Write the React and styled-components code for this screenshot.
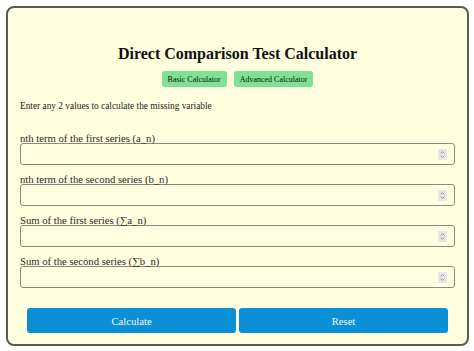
import React from "react";
import styled, { createGlobalStyle } from "styled-components";

const Global = createGlobalStyle`
  html, body {
    margin: 0;
    background: #fff;
  }
  body {
    padding: 6px 5px 4px 6px;
    font-family: "Liberation Serif", "Times New Roman", serif;
    color: #222;
  }
`;

const Card = styled.div`
  background: #ffffe0;
  border: 2px solid #5a5a55;
  border-radius: 8px;
  padding: 37px 12px 11px;
`;

const Title = styled.h1`
  margin: 0;
  text-align: center;
  font-size: 16px;
  font-weight: bold;
  color: #111;
`;

const ModeBar = styled.div`
  display: flex;
  justify-content: center;
  gap: 7px;
  margin: 8px 0 14px;
`;

const ModeButton = styled.button`
  height: 16px;
  padding: 0 6px;
  border: none;
  border-radius: 3px;
  background: #7fe292;
  color: #111;
  font-family: inherit;
  font-size: 8px;
  cursor: pointer;
`;

const Hint = styled.p`
  margin: 0 0 21px;
  font-size: 9.33px;
  color: #222;
`;

const Fields = styled.div`
  display: flex;
  flex-direction: column;
  gap: 8px;
`;

const Field = styled.div`
  display: flex;
  flex-direction: column;
`;

const Label = styled.label`
  position: relative;
  z-index: 1;
  display: block;
  font-size: 10.67px;
  line-height: 12px;
  margin-bottom: -1px;
  color: #2a2a2a;
`;

const InputBox = styled.div`
  box-sizing: border-box;
  display: flex;
  align-items: center;
  height: 22px;
  padding: 0 7px;
  border: 1px solid #8a8a80;
  border-radius: 3px;
  background: #ffffe2;
`;

const Input = styled.input`
  flex: 1;
  min-width: 0;
  height: 100%;
  margin: 0;
  padding: 0;
  border: none;
  background: transparent;
  font-family: inherit;
  font-size: 10.67px;
  outline: none;
  -moz-appearance: textfield;

  &::-webkit-inner-spin-button,
  &::-webkit-outer-spin-button {
    -webkit-appearance: none;
    margin: 0;
  }
`;

const Spinner = styled.svg`
  flex: none;
  width: 9px;
  height: 11px;
`;

const Actions = styled.div`
  display: flex;
  gap: 3px;
  padding: 0 7px;
  margin-top: 20px;
`;

const ActionButton = styled.button`
  flex: 1;
  height: 25px;
  border: none;
  border-radius: 3px;
  background: #0b8fd7;
  color: #f2f8ff;
  font-family: inherit;
  font-size: 10.67px;
  cursor: pointer;
`;

const SpinIcon = () => (
  <Spinner viewBox="0 0 9 11">
    <rect x="0" y="0" width="9" height="11" rx="1" fill="#e6e6e2" />
    <path d="M2.8 4.3 L4.5 2.6 L6.2 4.3" fill="none" stroke="#8c8c8c" strokeWidth="0.9" />
    <path d="M2.8 6.7 L4.5 8.4 L6.2 6.7" fill="none" stroke="#8c8c8c" strokeWidth="0.9" />
  </Spinner>
);

const fields = [
  { id: "an", label: "nth term of the first series (a_n)" },
  { id: "bn", label: "nth term of the second series (b_n)" },
  { id: "san", label: "Sum of the first series (∑a_n)" },
  { id: "sbn", label: "Sum of the second series (∑b_n)" },
];

export default function App() {
  return (
    <>
      <Global />
      <Card>
        <Title>Direct Comparison Test Calculator</Title>
        <ModeBar>
          <ModeButton>Basic Calculator</ModeButton>
          <ModeButton>Advanced Calculator</ModeButton>
        </ModeBar>
        <Hint>Enter any 2 values to calculate the missing variable</Hint>
        <Fields>
          {fields.map((f) => (
            <Field key={f.id}>
              <Label htmlFor={f.id}>{f.label}</Label>
              <InputBox>
                <Input id={f.id} type="number" />
                <SpinIcon />
              </InputBox>
            </Field>
          ))}
        </Fields>
        <Actions>
          <ActionButton>Calculate</ActionButton>
          <ActionButton>Reset</ActionButton>
        </Actions>
      </Card>
    </>
  );
}
